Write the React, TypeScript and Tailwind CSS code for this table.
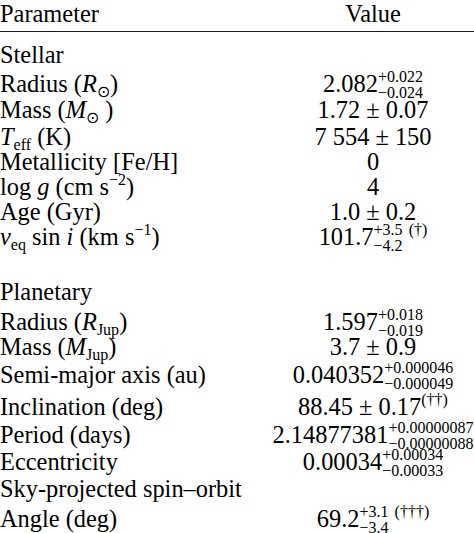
import React from 'react';

// stacked upper/lower error bars, e.g. 2.082 +0.022 −0.024
const Err = ({ up, lo }: { up: string; lo: string }) => (
  <span className="inline-flex flex-col items-start text-left text-[16px] leading-[16px] align-[10px] -my-[9px]">
    <span>{up}</span>
    <span>{lo}</span>
  </span>
);

const Sup = ({ children }: { children: React.ReactNode }) => (
  <span className="text-[16px] leading-[0] align-[10px]">{children}</span>
);

const Sub = ({ children }: { children: React.ReactNode }) => (
  <span className="text-[16px] leading-[0] align-[-5px]">{children}</span>
);

const Row = ({ h, left, right }: { h: string; left?: React.ReactNode; right?: React.ReactNode }) => (
  <div className={`grid grid-cols-[272px_202px] items-end ${h}`}>
    <div className="whitespace-nowrap leading-[25px]">{left}</div>
    <div className="whitespace-nowrap text-center leading-[25px]">{right}</div>
  </div>
);

const App: React.FC = () => {
  return (
    <div className="w-[474px] h-[533px] overflow-hidden bg-white text-black text-[24.4px] font-['Liberation_Serif','Times_New_Roman',serif]">
      {/* header */}
      <div className="grid grid-cols-[272px_202px] items-start h-[32px] pt-[1px] border-b border-[#1a1a1a]">
        <div className="leading-[25px]">Parameter</div>
        <div className="leading-[25px] text-center">Value</div>
      </div>

      {/* Stellar */}
      <Row h="h-[35px]" left="Stellar" />
      <Row
        h="h-[29px]"
        left={<>Radius (<i>R</i><Sub>⊙</Sub>)</>}
        right={<>2.082<Err up="+0.022" lo="−0.024" /></>}
      />
      <Row h="h-[26px]" left={<>Mass (<i>M</i><Sub>⊙</Sub> )</>} right="1.72 ± 0.07" />
      <Row h="h-[27px]" left={<><i>T</i><Sub>eff</Sub> (K)</>} right="7 554 ± 150" />
      <Row h="h-[25px]" left="Metallicity [Fe/H]" right="0" />
      <Row h="h-[25px]" left={<>log <i>g</i> (cm s<Sup>−2</Sup>)</>} right="4" />
      <Row h="h-[25px]" left="Age (Gyr)" right="1.0 ± 0.2" />
      <Row
        h="h-[25px]"
        left={<><i>v</i><Sub>eq</Sub> sin <i>i</i> (km s<Sup>−1</Sup>)</>}
        right={<>101.7<Err up="+3.5" lo="−4.2" /> <Sup>(†)</Sup></>}
      />

      {/* Planetary */}
      <Row h="h-[55px]" left="Planetary" />
      <Row
        h="h-[30px]"
        left={<>Radius (<i>R</i><Sub>Jup</Sub>)</>}
        right={<>1.597<Err up="+0.018" lo="−0.019" /></>}
      />
      <Row h="h-[25px]" left={<>Mass (<i>M</i><Sub>Jup</Sub>)</>} right="3.7 ± 0.9" />
      <Row
        h="h-[28px]"
        left="Semi-major axis (au)"
        right={<>0.040352<Err up="+0.000046" lo="−0.000049" /></>}
      />
      <Row h="h-[32px]" left="Inclination (deg)" right={<>88.45 ± 0.17<Sup>(††)</Sup></>} />
      <Row
        h="h-[28px]"
        left="Period (days)"
        right={<>2.14877381<Err up="+0.00000087" lo="−0.00000088" /></>}
      />
      <Row
        h="h-[27px]"
        left="Eccentricity"
        right={<>0.00034<Err up="+0.00034" lo="−0.00033" /></>}
      />
      <Row h="h-[27px]" left="Sky-projected spin–orbit" />
      <Row
        h="h-[30px]"
        left="Angle (deg)"
        right={<>69.2<Err up="+3.1" lo="−3.4" /> <Sup>(†††)</Sup></>}
      />
    </div>
  );
};

export default App;
